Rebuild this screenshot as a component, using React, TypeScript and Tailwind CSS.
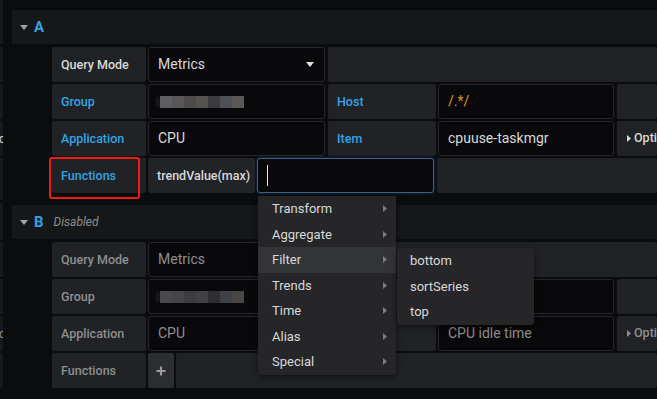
import React from "react";

const BLUE = "text-[#33a2e5]";

function Caret({ color = "#9fa0a3" }: { color?: string }) {
  return (
    <svg width="8" height="5" viewBox="0 0 8 5" className="shrink-0">
      <path d="M0 0 L8 0 L4 5 Z" fill={color} />
    </svg>
  );
}

function RightTri({ color = "#7b7b80" }: { color?: string }) {
  return (
    <svg width="4" height="7" viewBox="0 0 4 7" className="shrink-0">
      <path d="M0 0 L4 3.5 L0 7 Z" fill={color} />
    </svg>
  );
}

function Header({ letter, disabled }: { letter: string; disabled?: boolean }) {
  return (
    <div className="h-[34px] bg-[#161719] flex items-center pl-[8px]">
      <Caret />
      <span className={`ml-[6px] text-[15px] font-bold ${BLUE}`}>{letter}</span>
      {disabled && (
        <span className="ml-[10px] text-[12px] italic text-[#8e8e8e]">Disabled</span>
      )}
    </div>
  );
}

function Label({
  text,
  w = 94,
  color,
}: {
  text: string;
  w?: number;
  color: string;
}) {
  return (
    <div
      className={`h-[35px] shrink-0 bg-[#202226] rounded-[2px] flex items-center pl-[9px] pt-[1px] text-[12.5px] font-medium ${color} ${
        w === 94 ? "w-[94px]" : "w-[108px]"
      }`}
    >
      {text}
    </div>
  );
}

function Input({
  children,
  w,
  focused,
}: {
  children?: React.ReactNode;
  w: string;
  focused?: boolean;
}) {
  return (
    <div
      className={`h-[35px] shrink-0 ${w} rounded-[3px] bg-[#09090b] border flex items-center pl-[9px] pr-[10px] text-[14px] ${
        focused
          ? "border-[#3a5f8c] shadow-[0_0_3px_rgba(50,116,217,0.45)]"
          : "border-[#25262a]"
      }`}
    >
      {children}
    </div>
  );
}

function Filler({ children, className = "" }: { children?: React.ReactNode; className?: string }) {
  return (
    <div className={`h-[35px] flex-1 bg-[#202226] rounded-[2px] flex items-center overflow-hidden ${className}`}>
      {children}
    </div>
  );
}

function Blur({ dim }: { dim?: boolean }) {
  const cols = dim
    ? ["#4a4a4e", "#47444a", "#3e3c40", "#444146", "#2e2e33", "#3f4148", "#4a4748"]
    : ["#5f5f63", "#5a5658", "#4e4b4d", "#56524f", "#3b3b40", "#4d5058", "#5a5758"];
  return (
    <div className="flex items-center -ml-[2px]">
      <div className="w-[4px] h-[10px] bg-[#19191c] blur-[1px]" />
      <div className="flex h-[12px] blur-[0.4px]">
        {cols.map((c, i) => (
          <div key={i} className="w-[12px] h-[12px]" style={{ background: c }} />
        ))}
      </div>
    </div>
  );
}

function Row({ children }: { children: React.ReactNode }) {
  return <div className="flex h-[35px] items-center">{children}</div>;
}

function Options({ dim }: { dim?: boolean }) {
  return (
    <Filler className="pl-[10px]">
      <RightTri color={dim ? "#8e8e8e" : "#d8d9da"} />
      <span
        className={`ml-[3px] text-[12.5px] font-medium whitespace-nowrap ${
          dim ? "text-[#8e8e8e]" : "text-[#d8d9da]"
        }`}
      >
        Options
      </span>
    </Filler>
  );
}

function StripCell({ h, text, dim }: { h: string; text?: boolean; dim?: boolean }) {
  return (
    <div className={`${h} w-[3px] bg-[#17181b] overflow-hidden flex items-center`}>
      {text && (
        <span className={`-ml-[1px] text-[12px] ${dim ? "text-[#8e8e8e]" : "text-[#d8d9da]"}`}>c</span>
      )}
    </div>
  );
}

function Strip() {
  return (
    <div className="w-[3px] shrink-0 flex flex-col">
      <StripCell h="h-[44px]" />
      <div className="h-[3px]" />
      <div className="flex flex-col gap-[2px]">
        <StripCell h="h-[35px]" />
        <StripCell h="h-[35px]" />
        <StripCell h="h-[35px]" text />
        <StripCell h="h-[42px]" />
      </div>
      <div className="h-[3px]" />
      <StripCell h="h-[37px]" />
      <div className="h-[2px]" />
      <div className="flex flex-col gap-[2px]">
        <StripCell h="h-[35px]" />
        <StripCell h="h-[35px]" />
        <StripCell h="h-[35px]" text dim />
        <StripCell h="h-[35px]" />
      </div>
    </div>
  );
}

const menuItems = ["Transform", "Aggregate", "Filter", "Trends", "Time", "Alias", "Special"];
const subItems = ["bottom", "sortSeries", "top"];

export default function App() {
  const W = "text-[#d8d9da]";
  const G = "text-[#8e8e8e]";
  return (
    <div className="relative w-[657px] h-[399px] overflow-hidden bg-[#0b0c0e] font-['Roboto','Liberation_Sans',sans-serif] flex">
      <Strip />
      <div className="ml-[9px] flex-1 pt-[10px] flex flex-col min-w-0">
        <Header letter="A" />
        <div className="mt-[3px] pl-[40px] flex flex-col gap-[2px]">
          <Row>
            <Label text="Query Mode" color={W} />
            <div className="w-[2px]" />
            <Input w="w-[177px]">
              <span className={`${W} flex-1`}>Metrics</span>
              <Caret color="#e0e0e0" />
            </Input>
            <div className="w-[3px]" />
            <Filler />
          </Row>
          <Row>
            <Label text="Group" color={BLUE} />
            <div className="w-[2px]" />
            <Input w="w-[177px]">
              <Blur />
            </Input>
            <div className="w-[3px]" />
            <Label text="Host" w={108} color={BLUE} />
            <div className="w-[2px]" />
            <Input w="w-[176px]">
              <span className="text-[#e0952c]">/.*/</span>
            </Input>
            <div className="w-[3px]" />
            <Filler />
          </Row>
          <Row>
            <Label text="Application" color={BLUE} />
            <div className="w-[2px]" />
            <Input w="w-[177px]">
              <span className={W}>CPU</span>
            </Input>
            <div className="w-[3px]" />
            <Label text="Item" w={108} color={BLUE} />
            <div className="w-[2px]" />
            <Input w="w-[176px]">
              <span className={W}>cpuuse-taskmgr</span>
            </Input>
            <div className="w-[3px]" />
            <Options />
          </Row>
          <Row>
            <Label text="Functions" color={BLUE} />
            <div className="w-[2px]" />
            <div className="h-[35px] w-[107px] shrink-0 bg-[#222326] rounded-[2px] flex items-center pl-[9px] pt-[1px] text-[12.5px] font-medium text-[#d8d9da]">
              trendValue(max)
            </div>
            <div className="w-[2px]" />
            <Input w="w-[177px]" focused>
              <div className="w-[1px] h-[21px] bg-[#e8e8e8]" />
            </Input>
            <div className="w-[3px]" />
            <Filler />
          </Row>
        </div>

        <div className="mt-[12px]">
          <Header letter="B" disabled />
        </div>
        <div className="mt-[3px] pl-[40px] flex flex-col gap-[2px]">
          <Row>
            <Label text="Query Mode" color={G} />
            <div className="w-[2px]" />
            <Input w="w-[177px]">
              <span className={`${G} flex-1`}>Metrics</span>
              <Caret color="#8e8e8e" />
            </Input>
            <div className="w-[3px]" />
            <Filler />
          </Row>
          <Row>
            <Label text="Group" color={G} />
            <div className="w-[2px]" />
            <Input w="w-[177px]">
              <Blur dim />
            </Input>
            <div className="w-[3px]" />
            <Label text="Host" w={108} color={G} />
            <div className="w-[2px]" />
            <Input w="w-[176px]" />
            <div className="w-[3px]" />
            <Filler />
          </Row>
          <Row>
            <Label text="Application" color={G} />
            <div className="w-[2px]" />
            <Input w="w-[177px]">
              <span className={G}>CPU</span>
            </Input>
            <div className="w-[3px]" />
            <Label text="Item" w={108} color={G} />
            <div className="w-[2px]" />
            <Input w="w-[176px]">
              <span className={G}>CPU idle time</span>
            </Input>
            <div className="w-[3px]" />
            <Options dim />
          </Row>
          <Row>
            <Label text="Functions" color={G} />
            <div className="w-[2px]" />
            <div className="h-[35px] w-[26px] shrink-0 bg-[#2c2d31] rounded-[2px] flex items-center justify-center">
              <svg width="10" height="10" viewBox="0 0 10 10">
                <path d="M5 0.5 V9.5 M0.5 5 H9.5" stroke="#9a9a9e" strokeWidth="2.2" />
              </svg>
            </div>
            <div className="w-[2px]" />
            <Filler />
          </Row>
        </div>
      </div>

      {/* dropdown menu */}
      <div className="absolute left-[258px] top-[196px] w-[138px] bg-[#262628] rounded-b-[3px] shadow-[0_2px_6px_rgba(0,0,0,0.5)] flex flex-col">
        {menuItems.map((m) => (
          <div
            key={m}
            className={`h-[25.5px] flex items-center pl-[14px] pr-[9px] text-[13px] text-[#d8d9da] ${
              m === "Filter" ? "bg-[#333437]" : ""
            }`}
          >
            <span className="flex-1">{m}</span>
            <RightTri />
          </div>
        ))}
      </div>

      {/* submenu */}
      <div className="absolute left-[397px] top-[248px] w-[137px] bg-[#262628] rounded-[4px] shadow-[0_2px_6px_rgba(0,0,0,0.5)] flex flex-col">
        {subItems.map((m) => (
          <div key={m} className="h-[25.5px] flex items-center pl-[13px] text-[13px] text-[#d8d9da]">
            {m}
          </div>
        ))}
      </div>

      {/* red annotation box */}
      <div className="absolute left-[49px] top-[157px] w-[91px] h-[42px] border-2 border-[#f01c12] rounded-[3px]" />
    </div>
  );
}
